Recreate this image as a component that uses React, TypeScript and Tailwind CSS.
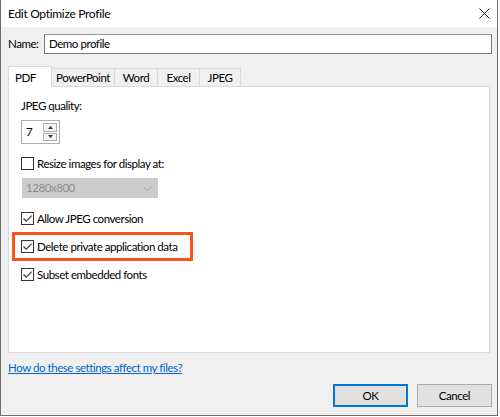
import React from "react";

const font = { fontFamily: 'Lato, "Noto Sans", sans-serif' };

function Check({ checked }: { checked: boolean }) {
	return (
		<span className="flex h-[13px] w-[13px] shrink-0 items-center justify-center border border-[#333333] bg-white">
			{checked && (
				<svg width="11" height="11" viewBox="0 0 11 11">
					<path d="M1.5 5.5 L4.2 8.2 L9.6 2.6" fill="none" stroke="#333333" strokeWidth="1.1" />
				</svg>
			)}
		</span>
	);
}

function CheckRow({ checked, label }: { checked: boolean; label: string }) {
	return (
		<div className="flex h-[15px] items-center gap-[3px] whitespace-nowrap">
			<Check checked={checked} />
			<span className="leading-[15px] text-black">{label}</span>
		</div>
	);
}

const tabs = ["PowerPoint", "Word", "Excel", "JPEG"];
const tabWidths = ["w-[63px]", "w-[43px]", "w-[42px]", "w-[41px]"];

export default function App() {
	return (
		<div
			className="h-[417px] w-[500px] whitespace-nowrap bg-white text-[11.5px] tracking-[-0.45px]"
			style={font}
		>
			<div className="flex h-[416px] w-[498px] flex-col border-x border-b border-[#6f6f6f] bg-[#f0f0f0]">
				{/* title bar */}
				<div className="flex h-[27px] shrink-0 items-center justify-between bg-white pl-[7px] pr-[7px]">
					<span className="text-[12px] tracking-[-0.3px] text-black">Edit Optimize Profile</span>
					<svg width="11" height="11" viewBox="0 0 11 11">
						<path d="M0.5 0.5 L10.5 10.5 M10.5 0.5 L0.5 10.5" stroke="#222" strokeWidth="1" />
					</svg>
				</div>

				<div className="flex flex-1 flex-col pl-[7px]">
					{/* name */}
					<div className="mt-[7px] flex h-[20px] items-center">
						<span className="w-[36px] text-black">Name:</span>
						<div className="flex h-[20px] w-[448px] items-center border border-[#7a7a7a] border-t-[#9a9a9a] bg-white pl-[4px] text-black">
							Demo profile
						</div>
					</div>

					{/* tabs */}
					<div className="mt-[12px] flex h-[20px] items-end">
						<div className="relative z-10 -mb-px flex h-[21px] w-[44px] items-start border border-b-0 border-[#d9d9d9] bg-white pl-[6px] pt-[2px] text-black">
							PDF
						</div>
						{tabs.map((t, i) => (
							<div
								key={t}
								className={`flex h-[18px] ${tabWidths[i]} items-center justify-center border border-b-0 border-l-0 border-[#d9d9d9] bg-[#f0f0f0] text-black`}
							>
								{t}
							</div>
						))}
					</div>

					{/* panel */}
					<div className="flex h-[267px] w-[482px] flex-col border border-[#d9d9d9] bg-white pl-[12px]">
						<span className="mt-[11px] leading-[15px] text-black">JPEG quality:</span>
						<div className="mt-[7px] flex h-[24px] w-[39px] border border-[#adadad] bg-white">
							<div className="flex flex-1 items-center pl-[4px] text-black">7</div>
							<div className="my-[2px] mr-[2px] flex w-[14px] flex-col gap-px">
								<div className="flex flex-1 items-center justify-center border border-[#adadad] bg-[#f5f5f5]">
									<svg width="5" height="3" viewBox="0 0 5 3">
										<path d="M0 3 L2.5 0 L5 3 Z" fill="#333" />
									</svg>
								</div>
								<div className="flex flex-1 items-center justify-center border border-[#adadad] bg-[#f5f5f5]">
									<svg width="5" height="3" viewBox="0 0 5 3">
										<path d="M0 0 L2.5 3 L5 0 Z" fill="#333" />
									</svg>
								</div>
							</div>
						</div>

						<div className="mt-[12px]">
							<CheckRow checked={false} label="Resize images for display at:" />
						</div>
						<div className="ml-px mt-[7px] flex h-[20px] w-[136px] items-center justify-between bg-[#cccccc] pl-[4px] pr-[6px]">
							<span className="text-[#8c8c8c]">1280x800</span>
							<svg width="9" height="5" viewBox="0 0 9 5">
								<path d="M0.5 0.5 L4.5 4.5 L8.5 0.5" fill="none" stroke="#a8a8a8" strokeWidth="1" />
							</svg>
						</div>

						<div className="mt-[13px]">
							<CheckRow checked label="Allow JPEG conversion" />
						</div>
						<div className="-ml-[9px] mt-[6px] flex h-[29px] w-[181px] items-center border-[3px] border-[#fb5419] pl-[6px]">
							<CheckRow checked label="Delete private application data" />
						</div>
						<div className="mt-[6px]">
							<CheckRow checked label="Subset embedded fonts" />
						</div>
					</div>

					{/* link */}
					<a className="mt-[7px] w-fit leading-[15px] text-[#0066cc] underline">
						How do these settings affect my files?
					</a>

					{/* buttons */}
					<div className="mt-[9px] flex justify-end gap-[9px] pr-[5px]">
						<button className="flex h-[23px] w-[75px] items-center justify-center border-2 border-[#0078d7] bg-[#e1e1e1] text-black">
							OK
						</button>
						<button className="flex h-[23px] w-[75px] items-center justify-center border border-[#adadad] bg-[#e1e1e1] text-black">
							Cancel
						</button>
					</div>
				</div>
			</div>
		</div>
	);
}
